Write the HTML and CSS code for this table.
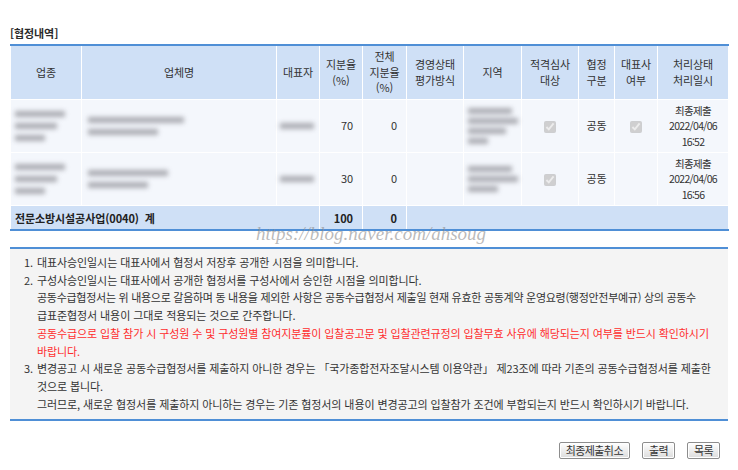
FILE: index.html
```html
<!DOCTYPE html>
<html lang="ko">
<head>
<meta charset="utf-8">
<title>협정내역</title>
<link rel="stylesheet" href="styles.css">
</head>
<body>
<div class="page">
  <div class="title">[협정내역]</div>
  <table class="grid">
    <colgroup>
      <col class="c71"><col class="c195"><col class="c43"><col class="c43"><col class="c44"><col class="c57"><col class="c58"><col class="c57"><col class="c36"><col class="c43"><col class="c71">
    </colgroup>
    <thead>
      <tr>
        <th>업종</th>
        <th>업체명</th>
        <th>대표자</th>
        <th>지분율<br>(%)</th>
        <th>전체<br>지분율<br>(%)</th>
        <th>경영상태<br>평가방식</th>
        <th>지역</th>
        <th>적격심사<br>대상</th>
        <th>협정<br>구분</th>
        <th>대표사<br>여부</th>
        <th>처리상태<br>처리일시</th>
      </tr>
    </thead>
    <tbody>
      <tr>
        <td><div class="blur lines3"><span class="w50"></span><span class="w42"></span><span class="w30"></span></div></td>
        <td><div class="blur lines2"><span class="w96"></span><span class="w70"></span></div></td>
        <td><div class="blur right"><span class="w34"></span></div></td>
        <td class="num">70</td>
        <td class="num">0</td>
        <td></td>
        <td><div class="blur area"><span class="w44"></span><span class="w50"></span><span class="w38"></span><span class="w20"></span></div></td>
        <td class="ctr"><input type="checkbox" checked disabled></td>
        <td class="ctr">공동</td>
        <td class="ctr"><input type="checkbox" checked disabled></td>
        <td class="ctr date">최종제출<br>2022/04/06<br>16:52</td>
      </tr>
      <tr>
        <td><div class="blur lines3"><span class="w50"></span><span class="w42"></span><span class="w30"></span></div></td>
        <td><div class="blur lines2"><span class="w80"></span><span class="w60"></span></div></td>
        <td><div class="blur right"><span class="w34"></span></div></td>
        <td class="num">30</td>
        <td class="num">0</td>
        <td></td>
        <td><div class="blur area"><span class="w44"></span><span class="w50"></span><span class="w30"></span></div></td>
        <td class="ctr"><input type="checkbox" checked disabled></td>
        <td class="ctr">공동</td>
        <td></td>
        <td class="ctr date">최종제출<br>2022/04/06<br>16:56</td>
      </tr>
      <tr class="total">
        <td colspan="3" class="label">전문소방시설공사업(0040)&nbsp; 계</td>
        <td class="num">100</td>
        <td class="num">0</td>
        <td colspan="6"></td>
      </tr>
    </tbody>
  </table>

  <div class="notes">
    <div class="note"><span class="no">1.</span><span class="txt">대표사승인일시는 대표사에서 협정서 저장후 공개한 시점을 의미합니다.</span></div>
    <div class="note"><span class="no">2.</span><span class="txt">구성사승인일시는 대표사에서 공개한 협정서를 구성사에서 승인한 시점을 의미합니다.<br><span class="tight">공동수급협정서는 위 내용으로 갈음하며 동 내용을 제외한 사항은 공동수급협정서 제출일 현재 유효한 공동계약 운영요령(행정안전부예규) 상의 공동수</span><br>급표준협정서 내용이 그대로 적용되는 것으로 간주합니다.<br><span class="red">공동수급으로 입찰 참가 시 구성원 수 및 구성원별 참여지분률이 입찰공고문 및 입찰관련규정의 입찰무효 사유에 해당되는지 여부를 반드시 확인하시기<br>바랍니다.</span></span></div>
    <div class="note"><span class="no">3.</span><span class="txt">변경공고 시 새로운 공동수급협정서를 제출하지 아니한 경우는 「국가종합전자조달시스템 이용약관」 제23조에 따라 기존의 공동수급협정서를 제출한<br>것으로 봅니다.<br>그러므로, 새로운 협정서를 제출하지 아니하는 경우는 기존 협정서의 내용이 변경공고의 입찰참가 조건에 부합되는지 반드시 확인하시기 바랍니다.</span></div>
  </div>

  <div class="buttons">
    <button type="button" class="btn">최종제출취소</button>
    <button type="button" class="btn">출력</button>
    <button type="button" class="btn">목록</button>
  </div>

  <div class="watermark">https://blog.naver.com/ahsoug</div>
</div>
</body>
</html>
```

FILE: styles.css
```css
html, body {
  margin: 0;
  padding: 0;
  background: #ffffff;
}

body {
  font-family: "Noto Sans CJK KR", "Noto Sans", sans-serif;
  font-size: 11px;
  color: #333333;
  letter-spacing: -0.1px;
}

.page {
  position: relative;
  width: 718px;
  padding: 26px 10px 0 10px;
}

.title {
  font-weight: bold;
  line-height: 14px;
  height: 18px;
  color: #2b2b2b;
}

/* table */
.grid {
  width: 718px;
  table-layout: fixed;
  border-collapse: collapse;
  border-top: 2px solid #4f8fd6;
  border-bottom: 2px solid #4f8fd6;
}

.c71 { width: 71px; }
.c195 { width: 195px; }
.c43 { width: 43px; }
.c44 { width: 44px; }
.c57 { width: 57px; }
.c58 { width: 58px; }
.c36 { width: 36px; }

.grid th,
.grid td {
  border: 1px solid #ffffff;
  padding: 0;
  line-height: 15.5px;
  vertical-align: middle;
}

.grid th {
  background: #cfe0f6;
  font-weight: normal;
  text-align: center;
  height: 53px;
  color: #333;
}

.grid tbody td {
  background: #f4f7fc;
  height: 52px;
}

.grid .num {
  text-align: right;
  padding-right: 9px;
}

.grid .ctr {
  text-align: center;
}

.grid .date {
  letter-spacing: -0.7px;
  font-size: 10.5px;
}

.grid input[type="checkbox"] {
  margin: 0;
  width: 12px;
  height: 12px;
  vertical-align: middle;
}

.grid .total td {
  background: #cfe0f6;
  height: 23px;
  line-height: 12px;
  font-weight: bold;
  color: #222;
}

.grid .total .label {
  padding-left: 4px;
}

/* blurred private data */
.blur {
  display: flex;
  flex-direction: column;
  gap: 6px;
  filter: blur(2.5px);
  opacity: 0.7;
}

.blur span {
  display: block;
  height: 6px;
  background: #8c8c94;
}

.blur.lines3 {
  padding-left: 4px;
  gap: 6px;
}

.blur.lines2 {
  padding-left: 6px;
  gap: 6px;
}

.blur.right {
  align-items: flex-end;
  padding-right: 5px;
}

.blur.area {
  padding-left: 4px;
  gap: 4px;
}

.w20 { width: 20px; }
.w30 { width: 30px; }
.w34 { width: 34px; }
.w38 { width: 38px; }
.w42 { width: 42px; }
.w44 { width: 44px; }
.w50 { width: 50px; }
.w60 { width: 60px; }
.w70 { width: 70px; }
.w80 { width: 80px; }
.w96 { width: 96px; }

/* notes */
.notes {
  margin-top: 16px;
  border-top: 2px solid #4f8fd6;
  border-bottom: 2px solid #4f8fd6;
  background: #f4f4f4;
  padding: 5px 0 6px 0;
  color: #333;
}

.note {
  display: flex;
  line-height: 17.7px;
  white-space: nowrap;
}

.note .no {
  width: 13px;
  padding-left: 14px;
  flex: none;
}

.note .tight {
  letter-spacing: -0.28px;
}

.note .red {
  color: #ff2d2d;
}

/* buttons */
.buttons {
  display: flex;
  justify-content: flex-end;
  gap: 12px;
  margin-top: 21px;
  padding-right: 8px;
}

.btn {
  height: 17px;
  padding: 0 6px;
  font-family: "Noto Sans CJK KR", "Noto Sans", sans-serif;
  font-size: 11px;
  letter-spacing: -0.6px;
  line-height: 15px;
  color: #333;
  border: 1px solid #8d8d8d;
  border-radius: 2px;
  background: linear-gradient(#ffffff, #dcdcdc);
  box-shadow: inset 0 0 0 1px #ffffff;
}

/* watermark overlay */
.watermark {
  position: absolute;
  left: 256px;
  top: 225px;
  font-family: "Liberation Serif", serif;
  font-style: italic;
  font-size: 19px;
  line-height: 18px;
  letter-spacing: 0;
  color: rgba(140, 140, 140, 0.6);
  pointer-events: none;
}
```
